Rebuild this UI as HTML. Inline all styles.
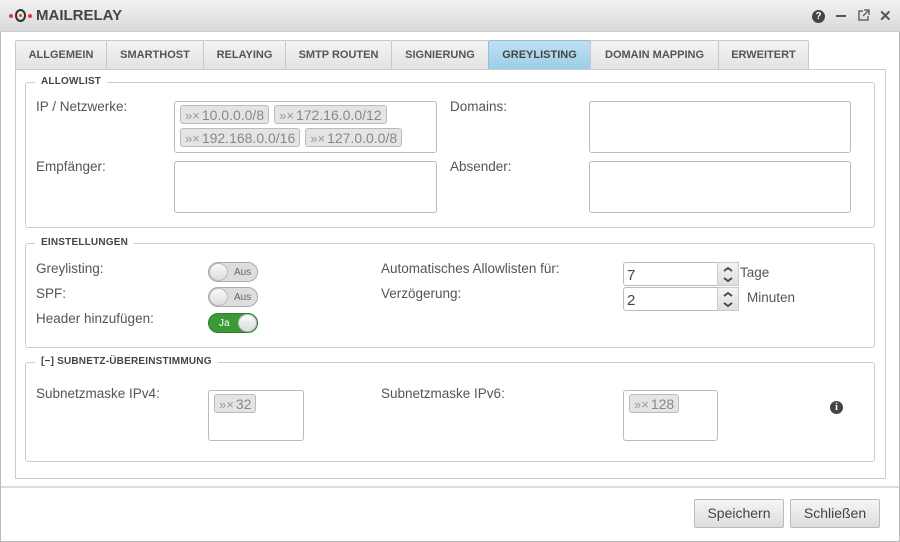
<!DOCTYPE html>
<html><head><meta charset="utf-8"><style>
*{box-sizing:border-box;margin:0;padding:0}
body{width:900px;height:542px;background:#fff;font-family:"Liberation Sans",sans-serif;position:relative;overflow:hidden;color:#444}
.a{position:absolute}
#win{left:0;top:0;width:900px;height:542px;border:1px solid #bbb;border-top:none}
#title{left:0;top:0;width:900px;height:32px;background:linear-gradient(#f2f2f2,#d9d9d9);border-bottom:1px solid #ccc}
.tab{top:40px;height:30px;background:linear-gradient(#f4f4f4,#e2e2e2);border:1px solid #c8c8c8;border-bottom:none;font-size:11px;font-weight:bold;color:#555;text-align:center;line-height:28px;border-radius:2px 2px 0 0}
.tab.act{background:linear-gradient(#bfe0f2,#9ccde8);border-color:#8ebfdc;color:#444}
#panel{left:15px;top:69px;width:871px;height:410px;border:1px solid #ccc}
.fs{border:1px solid #ccc;border-radius:3px}
.lg{font-size:10px;font-weight:bold;color:#444;background:#fff;padding:0 6px;letter-spacing:.2px}
.lbl{font-size:13.5px;color:#555}
.box{border:1px solid #bbb;border-radius:3px;background:#fff}
.tag{display:inline-block;border:1px solid #bbb;background:#e4e4e4;border-radius:3px;font-size:14px;color:#888;padding:0 4px;height:19px;line-height:18px;margin:3px 0 0 5px}
.tag b{font-weight:normal;font-size:13px;color:#999;margin-right:2px}
.tg{width:50px;height:20px;border-radius:10px;background:#ddd;border:1px solid #aaa;font-size:10px;color:#666}
.tg .k{position:absolute;top:0;width:19px;height:18px;border-radius:50%;background:linear-gradient(#fafafa,#ddd);border:1px solid #bbb}
.num{width:95px;height:24px;border:1px solid #bbb;border-radius:3px 0 0 3px;font-size:15px;color:#444;padding:4px 3px}
.sp{width:22px;height:24px;background:linear-gradient(#f4f4f4,#ddd);border:1px solid #ccc}
.btn{top:499px;height:29px;border:1px solid #bbb;border-radius:2px;background:linear-gradient(#f5f5f5,#ddd);font-size:14px;color:#444;text-align:center;line-height:27px}
</style></head><body>
<div id="win" class="a"></div>
<div id="title" class="a">
 <div class="a" style="left:9px;top:14px;width:4px;height:4px;border-radius:50%;background:#e33"></div>
 <div class="a" style="left:15px;top:9px;width:11px;height:13px;border-radius:50%;border:2px solid #333"></div>
 <div class="a" style="left:19px;top:14px;width:3px;height:3px;background:#e33;border-radius:50%"></div>
 <div class="a" style="left:28px;top:14px;width:4px;height:4px;border-radius:50%;background:#e33"></div>
 <div class="a" style="left:36px;top:7px;font-size:15px;font-weight:bold;color:#444">MAILRELAY</div>
 <div class="a" style="left:812px;top:10px;width:13px;height:13px;border-radius:50%;background:#444;color:#fff;font-size:10px;font-weight:bold;text-align:center;line-height:13px">?</div>
 <div class="a" style="left:836px;top:15px;width:10px;height:2px;background:#555"></div>
 <svg class="a" style="left:857px;top:9px" width="13" height="13" viewBox="0 0 13 13"><path d="M6 2H2v9h9V7" fill="none" stroke="#666" stroke-width="1.5"/><path d="M7 1h5v5M12 1L6 7" fill="none" stroke="#666" stroke-width="1.5"/></svg>
 <div class="a" style="left:879px;top:7px;font-size:15px;font-weight:bold;color:#555">✕</div>
</div>
<div class="tab a" style="left:15px;width:92px">ALLGEMEIN</div>
<div class="tab a" style="left:106px;width:98px">SMARTHOST</div>
<div class="tab a" style="left:203px;width:83px">RELAYING</div>
<div class="tab a" style="left:285px;width:107px">SMTP ROUTEN</div>
<div class="tab a" style="left:391px;width:98px">SIGNIERUNG</div>
<div class="tab a act" style="left:488px;width:103px">GREYLISTING</div>
<div class="tab a" style="left:590px;width:129px">DOMAIN MAPPING</div>
<div class="tab a" style="left:718px;width:91px">ERWEITERT</div>
<div id="panel" class="a"></div>

<div class="fs a" style="left:25px;top:82px;width:850px;height:146px"></div>
<div class="lg a" style="left:35px;top:76px">ALLOWLIST</div>
<div class="lbl a" style="left:36px;top:99px">IP / Netzwerke:</div>
<div class="box a" style="left:174px;top:101px;width:263px;height:52px">
 <span class="tag"><b>»×</b>10.0.0.0/8</span><span class="tag"><b>»×</b>172.16.0.0/12</span><br>
 <span class="tag"><b>»×</b>192.168.0.0/16</span><span class="tag"><b>»×</b>127.0.0.0/8</span>
</div>
<div class="lbl a" style="left:450px;top:99px">Domains:</div>
<div class="box a" style="left:589px;top:101px;width:262px;height:52px"></div>
<div class="lbl a" style="left:36px;top:159px">Empfänger:</div>
<div class="box a" style="left:174px;top:161px;width:263px;height:52px"></div>
<div class="lbl a" style="left:450px;top:159px">Absender:</div>
<div class="box a" style="left:589px;top:161px;width:262px;height:52px"></div>

<div class="fs a" style="left:25px;top:243px;width:850px;height:105px"></div>
<div class="lg a" style="left:35px;top:237px">EINSTELLUNGEN</div>
<div class="lbl a" style="left:36px;top:261px">Greylisting:</div>
<div class="lbl a" style="left:36px;top:286px">SPF:</div>
<div class="lbl a" style="left:36px;top:311px">Header hinzufügen:</div>
<div class="tg a" style="left:208px;top:262px"><div class="k" style="left:0"></div><span class="a" style="left:25px;top:4px">Aus</span></div>
<div class="tg a" style="left:208px;top:287px"><div class="k" style="left:0"></div><span class="a" style="left:25px;top:4px">Aus</span></div>
<div class="tg a" style="left:208px;top:313px;background:#3a9a36;border-color:#2d7f2a;color:#fff"><span class="a" style="left:10px;top:4px">Ja</span><div class="k" style="left:29px"></div></div>
<div class="lbl a" style="left:381px;top:261px">Automatisches Allowlisten für:</div>
<div class="lbl a" style="left:381px;top:286px">Verzögerung:</div>
<div class="num a" style="left:623px;top:262px">7</div>
<div class="sp a" style="left:717px;top:262px"><svg width="20" height="22"><path d="M6 8l4-3 4 3M6 15l4 3 4-3" fill="none" stroke="#444" stroke-width="1.8"/></svg></div>
<div class="lbl a" style="left:740px;top:265px">Tage</div>
<div class="num a" style="left:623px;top:287px">2</div>
<div class="sp a" style="left:717px;top:287px"><svg width="20" height="22"><path d="M6 8l4-3 4 3M6 15l4 3 4-3" fill="none" stroke="#444" stroke-width="1.8"/></svg></div>
<div class="lbl a" style="left:747px;top:290px">Minuten</div>

<div class="fs a" style="left:25px;top:362px;width:850px;height:100px"></div>
<div class="lg a" style="left:35px;top:356px">[−] SUBNETZ-ÜBEREINSTIMMUNG</div>
<div class="lbl a" style="left:36px;top:386px">Subnetzmaske IPv4:</div>
<div class="box a" style="left:208px;top:390px;width:96px;height:51px"><span class="tag"><b>»×</b>32</span></div>
<div class="lbl a" style="left:381px;top:386px">Subnetzmaske IPv6:</div>
<div class="box a" style="left:623px;top:390px;width:95px;height:51px"><span class="tag"><b>»×</b>128</span></div>
<div class="a" style="left:830px;top:401px;width:13px;height:13px;border-radius:50%;background:#444;color:#fff;font-size:10px;font-weight:bold;text-align:center;line-height:13px;font-family:'Liberation Serif',serif">i</div>

<div class="a" style="left:1px;top:486px;width:898px;height:2px;background:#ddd"></div>
<div class="btn a" style="left:694px;width:90px">Speichern</div>
<div class="btn a" style="left:790px;width:90px">Schließen</div>
</body></html>
